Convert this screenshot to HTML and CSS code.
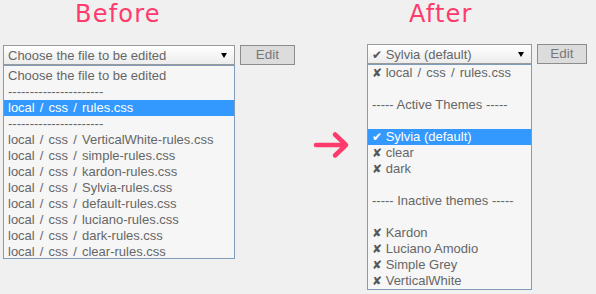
FILE: index.html
```html
<!DOCTYPE html>
<html lang="en">
<head>
    <meta charset="UTF-8">
    <title>Theme chooser: before / after</title>
    <link rel="stylesheet" href="styles.css">
</head>
<body>

<div class="panels">
    <!-- Before -->
    <div class="panel panel-before">
        <h1 class="title">Before</h1>
        <div class="controls">
            <div class="select">
                <span>Choose the file to be edited</span>
                <span class="caret"></span>
            </div>
            <div class="btn">Edit</div>
        </div>
        <ul class="listbox">
            <li>Choose the file to be edited</li>
            <li>----------------------</li>
            <li class="selected">local <span class="sl">/</span> css <span class="sl">/</span> rules.css</li>
            <li>----------------------</li>
            <li>local <span class="sl">/</span> css <span class="sl">/</span> VerticalWhite-rules.css</li>
            <li>local <span class="sl">/</span> css <span class="sl">/</span> simple-rules.css</li>
            <li>local <span class="sl">/</span> css <span class="sl">/</span> kardon-rules.css</li>
            <li>local <span class="sl">/</span> css <span class="sl">/</span> Sylvia-rules.css</li>
            <li>local <span class="sl">/</span> css <span class="sl">/</span> default-rules.css</li>
            <li>local <span class="sl">/</span> css <span class="sl">/</span> luciano-rules.css</li>
            <li>local <span class="sl">/</span> css <span class="sl">/</span> dark-rules.css</li>
            <li>local <span class="sl">/</span> css <span class="sl">/</span> clear-rules.css</li>
        </ul>
    </div>

    <!-- Arrow -->
    <div class="arrow-col">
        <svg class="arrow" width="37" height="28" viewBox="0 0 37 28">
            <path d="M3 14 H33 M22 3.5 L33 14 L22 24.5" fill="none" stroke="#ff3b6b" stroke-width="4.5" stroke-linecap="round" stroke-linejoin="round"/>
        </svg>
    </div>

    <!-- After -->
    <div class="panel panel-after">
        <h1 class="title">After</h1>
        <div class="controls">
            <div class="select">
                <span><span class="mark">&#10004;</span> Sylvia (default)</span>
                <span class="caret"></span>
            </div>
            <div class="btn">Edit</div>
        </div>
        <ul class="listbox">
            <li><span class="mark">&#10008;</span> local <span class="sl">/</span> css <span class="sl">/</span> rules.css</li>
            <li></li>
            <li>----- Active Themes -----</li>
            <li></li>
            <li class="selected"><span class="mark">&#10004;</span> Sylvia (default)</li>
            <li><span class="mark">&#10008;</span> clear</li>
            <li><span class="mark">&#10008;</span> dark</li>
            <li></li>
            <li>----- Inactive themes -----</li>
            <li></li>
            <li><span class="mark">&#10008;</span> Kardon</li>
            <li><span class="mark">&#10008;</span> Luciano Amodio</li>
            <li><span class="mark">&#10008;</span> Simple Grey</li>
            <li><span class="mark">&#10008;</span> VerticalWhite</li>
        </ul>
    </div>
</div>

</body>
</html>
```

FILE: styles.css
```css
/* General */
body {
    margin: 0;
    padding: 0 3px;
    background: #f0f0f0;
    font-family: "Liberation Sans", Arial, sans-serif;
    font-size: 13px;
    color: #666;
}
.panels {
    display: flex;
    align-items: flex-start;
}

/* Titles */
.title {
    margin: 0 0 17px;
    font-family: "DejaVu Sans", sans-serif;
    font-size: 24px;
    font-weight: normal;
    line-height: 28px;
    letter-spacing: 1.2px;
    color: #ff3b6b;
}
.panel-before .title { padding-left: 72px; }
.panel-after .title { padding-left: 42px; }

/* Select + button row */
.controls {
    display: flex;
    gap: 5px;
}
.panel-after .controls { margin-top: -1px; }
.select {
    display: flex;
    justify-content: space-between;
    align-items: center;
    box-sizing: border-box;
    height: 20px;
    padding: 0 7px 0 4px;
    border: 1px solid #999;
    background: linear-gradient(#ffffff, #ececec);
    white-space: nowrap;
}
.panel-before .select { width: 232px; }
.panel-after .select { width: 165px; }
.caret {
    width: 0;
    height: 0;
    border-left: 3px solid transparent;
    border-right: 3px solid transparent;
    border-top: 5px solid #000;
}
.btn {
    box-sizing: border-box;
    height: 20px;
    line-height: 18px;
    font-size: 13.5px;
    text-align: center;
    border: 1px solid #8c8c8c;
    background: #dcdcdc;
    color: #777;
}
.panel-before .btn { width: 55px; }
.panel-after .btn { width: 50px; }

/* Open list */
.listbox {
    list-style: none;
    margin: 0;
    padding: 0;
    box-sizing: border-box;
    border: 1px solid #7f9db9;
    background: #f6f6f6;
    overflow: hidden;
}
.panel-before .listbox {
    width: 232px;
    height: 194px;
    padding-top: 2px;
}
.panel-after .listbox { width: 165px; }
.listbox li {
    height: 16px;
    line-height: 16px;
    padding: 0 4px;
    white-space: nowrap;
}
.listbox li.selected {
    background: #3399ff;
    color: #fff;
}
.sl { padding: 0 1.5px; }
.mark {
    font-family: "DejaVu Sans", sans-serif;
    font-size: 12px;
    color: #555;
}
.selected .mark { color: #fff; }

/* Arrow between the two states */
.arrow-col {
    width: 72px;
    padding: 131px 0 0 18px;
    box-sizing: border-box;
}
.arrow { display: block; }
```
